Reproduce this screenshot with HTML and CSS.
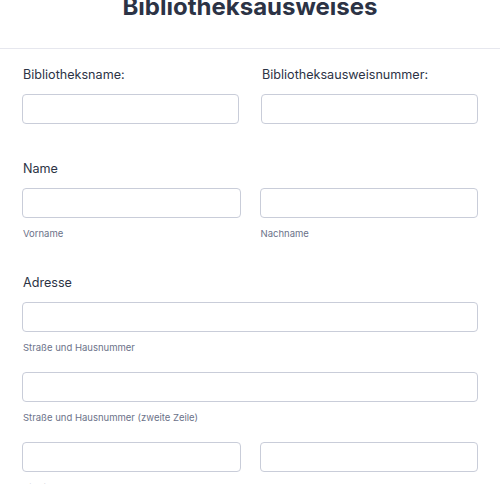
FILE: index.html
```html
<!DOCTYPE html>
<html lang="de">
<head>
<meta charset="utf-8">
<title>Bibliotheksausweises</title>
<link rel="stylesheet" href="styles.css">
</head>
<body>
<header class="header">
  <h1 class="title">Bibliotheksausweises</h1>
</header>
<main class="form">
  <div class="row row-wide">
    <div class="field">
      <label class="label">Bibliotheksname:</label>
      <div class="input"></div>
    </div>
    <div class="field">
      <label class="label">Bibliotheksausweisnummer:</label>
      <div class="input"></div>
    </div>
  </div>

  <section class="group group-name">
    <div class="label">Name</div>
    <div class="row">
      <div class="field">
        <div class="input"></div>
        <div class="sublabel">Vorname</div>
      </div>
      <div class="field">
        <div class="input"></div>
        <div class="sublabel">Nachname</div>
      </div>
    </div>
  </section>

  <section class="group group-address">
    <div class="label">Adresse</div>
    <div class="field">
      <div class="input"></div>
      <div class="sublabel">Straße und Hausnummer</div>
    </div>
    <div class="field field-next">
      <div class="input"></div>
      <div class="sublabel">Straße und Hausnummer (zweite Zeile)</div>
    </div>
    <div class="row field-next">
      <div class="field">
        <div class="input"></div>
        <div class="sublabel">Stadt</div>
      </div>
      <div class="field">
        <div class="input"></div>
        <div class="sublabel">Bundesland</div>
      </div>
    </div>
  </section>
</main>
</body>
</html>
```
FILE: styles.css
```css
* { box-sizing: border-box; }
html, body { margin: 0; padding: 0; background: #ffffff; }
body {
  font-family: Inter, "Noto Sans", "Liberation Sans", sans-serif;
  color: #2c3345;
  width: 500px;
  height: 484px;
  overflow: hidden;
}
.header {
  display: flow-root;
  height: 49px;
  border-bottom: 1px solid #e6e7ee;
  text-align: center;
}
.title {
  margin: -8px 0 0;
  font-size: 24px;
  line-height: 30px;
  font-weight: 700;
  color: #2c3345;
  letter-spacing: 0;
}
.form {
  padding: 18px 22px 0;
}
.row {
  display: grid;
  grid-template-columns: 1fr 1fr;
  column-gap: 19px;
}
.row-wide { column-gap: 22px; }
.field { display: flex; flex-direction: column; }
.label {
  font-size: 12.6px;
  line-height: 16px;
  font-weight: 400;
  color: #2c3345;
  margin-bottom: 11px;
  padding-left: 1px;
  display: block;
}
.input {
  height: 30px;
  border: 1px solid #c9cdd9;
  border-radius: 4px;
  background: #fff;
}
.sublabel {
  font-size: 9.5px;
  line-height: 12px;
  color: #6b7289;
  margin-top: 10px;
  padding-left: 1px;
}
.group-name { margin-top: 37px; }
.group-address { margin-top: 35px; }
.field-next { margin-top: 18px; }
```
